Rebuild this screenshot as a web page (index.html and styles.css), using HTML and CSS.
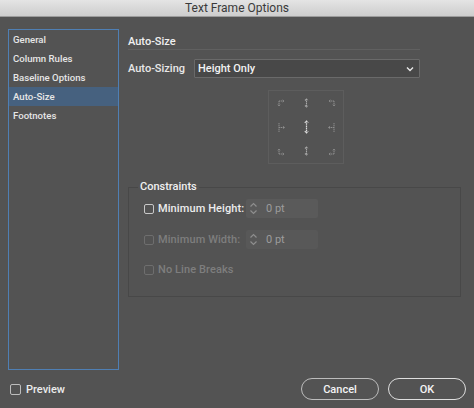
FILE: index.html
```html
<!DOCTYPE html>
<html>
<head>
<meta charset="utf-8">
<link rel="stylesheet" href="styles.css">
</head>
<body>
<div class="titlebar">Text Frame Options</div>
<div class="content">
  <ul class="sidebar">
    <li>General</li>
    <li>Column Rules</li>
    <li>Baseline Options</li>
    <li class="sel">Auto-Size</li>
    <li>Footnotes</li>
  </ul>
  <div class="panel">
    <div class="heading">Auto-Size</div>
    <div class="sizing-row">
      <span class="label">Auto-Sizing</span>
      <div class="select">
        <span>Height Only</span>
        <svg class="chev" width="8" height="6" viewBox="0 0 8 6"><path d="M1 1.5 L4 4.5 L7 1.5" fill="none" stroke="#e8e8e8" stroke-width="1.4"/></svg>
      </div>
    </div>
    <div class="proxy">
      <div class="cell"><svg width="9" height="9" viewBox="0 0 9 9"><path d="M2 2 H7 M2 2 V7 M5.6 1 L7 2 L5.6 3 M1 5.6 L2 7 L3 5.6" fill="none" stroke="#8e8e8e" stroke-width="1" stroke-dasharray="1.4 0.6"/></svg></div>
      <div class="cell"><svg width="7" height="10" viewBox="0 0 7 10"><path d="M3.5 1 V9 M2 2.5 L3.5 1 L5 2.5 M2 7.5 L3.5 9 L5 7.5" fill="none" stroke="#a6a6a6" stroke-width="1.1" stroke-dasharray="1.4 0.6"/></svg></div>
      <div class="cell"><svg width="9" height="9" viewBox="0 0 9 9"><path d="M7 2 H2 M7 2 V7 M3.4 1 L2 2 L3.4 3 M6 5.6 L7 7 L8 5.6" fill="none" stroke="#8e8e8e" stroke-width="1" stroke-dasharray="1.4 0.6"/></svg></div>
      <div class="cell"><svg width="9" height="11" viewBox="0 0 9 11"><path d="M2 1 V10 M2 5.5 H7.5 M6.2 4.4 L7.6 5.5 L6.2 6.6" fill="none" stroke="#8e8e8e" stroke-width="1" stroke-dasharray="1.4 0.6"/></svg></div>
      <div class="cell"><svg width="7" height="14" viewBox="0 0 7 14"><path d="M3.5 1 V13 M1.8 2.8 L3.5 1 L5.2 2.8 M1.8 11.2 L3.5 13 L5.2 11.2" fill="none" stroke="#dcdcdc" stroke-width="1.2" stroke-dasharray="1.6 0.6"/></svg></div>
      <div class="cell"><svg width="9" height="11" viewBox="0 0 9 11"><path d="M7 1 V10 M7 5.5 H1.5 M2.8 4.4 L1.4 5.5 L2.8 6.6" fill="none" stroke="#8e8e8e" stroke-width="1" stroke-dasharray="1.4 0.6"/></svg></div>
      <div class="cell"><svg width="9" height="9" viewBox="0 0 9 9"><path d="M2 7 H7 M2 7 V2 M5.6 6 L7 7 L5.6 8 M1 3.4 L2 2 L3 3.4" fill="none" stroke="#8e8e8e" stroke-width="1" stroke-dasharray="1.4 0.6"/></svg></div>
      <div class="cell"><svg width="7" height="10" viewBox="0 0 7 10"><path d="M3.5 1 V9 M2 2.5 L3.5 1 L5 2.5 M2 7.5 L3.5 9 L5 7.5" fill="none" stroke="#a6a6a6" stroke-width="1.1" stroke-dasharray="1.4 0.6"/></svg></div>
      <div class="cell"><svg width="9" height="9" viewBox="0 0 9 9"><path d="M7 7 H2 M7 7 V2 M3.4 6 L2 7 L3.4 8 M6 3.4 L7 2 L8 3.4" fill="none" stroke="#8e8e8e" stroke-width="1" stroke-dasharray="1.4 0.6"/></svg></div>
    </div>
    <fieldset class="constraints">
      <legend>Constraints</legend>
      <div class="row">
        <span class="cb"></span>
        <span class="txt">Minimum Height:</span>
        <div class="field">
          <svg width="9" height="13" viewBox="0 0 9 13"><path d="M1.5 4.5 L4.5 1.5 L7.5 4.5 M1.5 8.5 L4.5 11.5 L7.5 8.5" fill="none" stroke="#8e8e8e" stroke-width="1.2"/></svg>
          <span class="val">0 pt</span>
        </div>
      </div>
      <div class="row dis">
        <span class="cb"></span>
        <span class="txt">Minimum Width:</span>
        <div class="field">
          <svg width="9" height="13" viewBox="0 0 9 13"><path d="M1.5 4.5 L4.5 1.5 L7.5 4.5 M1.5 8.5 L4.5 11.5 L7.5 8.5" fill="none" stroke="#8e8e8e" stroke-width="1.2"/></svg>
          <span class="val">0 pt</span>
        </div>
      </div>
      <div class="row dis">
        <span class="cb"></span>
        <span class="txt">No Line Breaks</span>
      </div>
    </fieldset>
  </div>
</div>
<div class="footer">
  <div class="preview"><span class="cb"></span><span>Preview</span></div>
  <div class="buttons">
    <button class="btn">Cancel</button>
    <button class="btn ok">OK</button>
  </div>
</div>
</body>
</html>
```

FILE: styles.css
```css
* { box-sizing: border-box; }
html, body { margin: 0; padding: 0; }
body {
  width: 474px;
  height: 408px;
  overflow: hidden;
  background: #535353;
  font-family: Roboto, "Liberation Sans", sans-serif;
  font-weight: 500;
  color: #e8e8e8;
  font-size: 11px;
}
.titlebar {
  height: 17px;
  line-height: 16px;
  text-align: center;
  font-size: 12px;
  font-weight: 400;
  color: #3a3a3a;
  background: linear-gradient(#e4e4e4, #cdcdcd);
  border-bottom: 1px solid #9c9c9c;
}
.content {
  display: flex;
  gap: 9px;
  padding: 12px 13px 0 8px;
}
.sidebar {
  list-style: none;
  margin: 0;
  padding: 0;
  width: 111px;
  height: 341px;
  border: 1px solid #4f7fb4;
  font-size: 9.6px;
}
.sidebar li {
  height: 19px;
  line-height: 19px;
  padding-left: 4px;
  color: #e6e6e6;
}
.sidebar li.sel { background: #46617f; }
.panel {
  flex: 1;
  display: flex;
  flex-direction: column;
}
.heading {
  width: 292px;
  padding-top: 6px;
  line-height: 14px;
  height: 21px;
  border-bottom: 1px solid #606060;
  color: #f0f0f0;
}
.sizing-row {
  display: flex;
  align-items: center;
  margin-top: 9px;
}
.label { width: 66px; }
.select {
  width: 226px;
  height: 19px;
  display: flex;
  align-items: center;
  justify-content: space-between;
  padding: 0 5px 0 3px;
  background: #484848;
  border: 1px solid #6a6a6a;
  border-radius: 1px;
  color: #f2f2f2;
}
.chev { margin-top: 1px; }
.proxy {
  margin: 12px 0 0 140px;
  width: 76px;
  display: grid;
  grid-template-columns: repeat(3, 25px);
  grid-template-rows: repeat(3, 24px);
  border: 1px solid #5d5d5d;
}
.cell {
  display: flex;
  align-items: center;
  justify-content: center;
}
.constraints {
  margin: 16px 0 0 0;
  padding: 0 0 17px 9px;
  border: 1px solid #484848;
  min-width: 0;
}
.constraints legend {
  padding: 0 2px;
  line-height: 14px;
  color: #f0f0f0;
}
.row {
  display: flex;
  align-items: center;
  height: 19px;
  margin: 5px 0 0 6px;
}
.row + .row { margin-top: 12px; }
.row + .row + .row { margin-top: 11px; }
.cb {
  width: 10px;
  height: 10px;
  border: 1px solid #c8c8c8;
  border-radius: 2px;
  flex: none;
}
.row .txt {
  width: 92px;
  padding-left: 4px;
  color: #ececec;
  letter-spacing: 0.1px;
}
.field {
  width: 72px;
  height: 19px;
  display: flex;
  align-items: center;
  gap: 8px;
  padding-left: 3px;
  background: #5a5a5a;
  border-radius: 2px;
}
.val { color: #9c9c9c; font-weight: 400; }
.row.dis .txt { color: #7e7e7e; }
.row.dis .cb { border-color: #6e6e6e; }
.row.dis .field { background: #585858; }
.footer {
  display: flex;
  justify-content: space-between;
  align-items: center;
  margin-top: 8px;
  height: 22px;
  padding: 0 8px 0 10px;
}
.preview {
  display: flex;
  align-items: center;
  gap: 5px;
  color: #ececec;
}
.preview .cb { width: 11px; height: 11px; border-color: #bdbdbd; }
.buttons { display: flex; gap: 9px; }
.btn {
  width: 78px;
  height: 22px;
  border: 1.5px solid #bcbcbc;
  border-radius: 11px;
  background: transparent;
  color: #f4f4f4;
  font-family: Roboto, "Liberation Sans", sans-serif;
  font-weight: 500;
  font-size: 11px;
  padding: 0;
}
.btn.ok { border-color: #dedede; }
```
